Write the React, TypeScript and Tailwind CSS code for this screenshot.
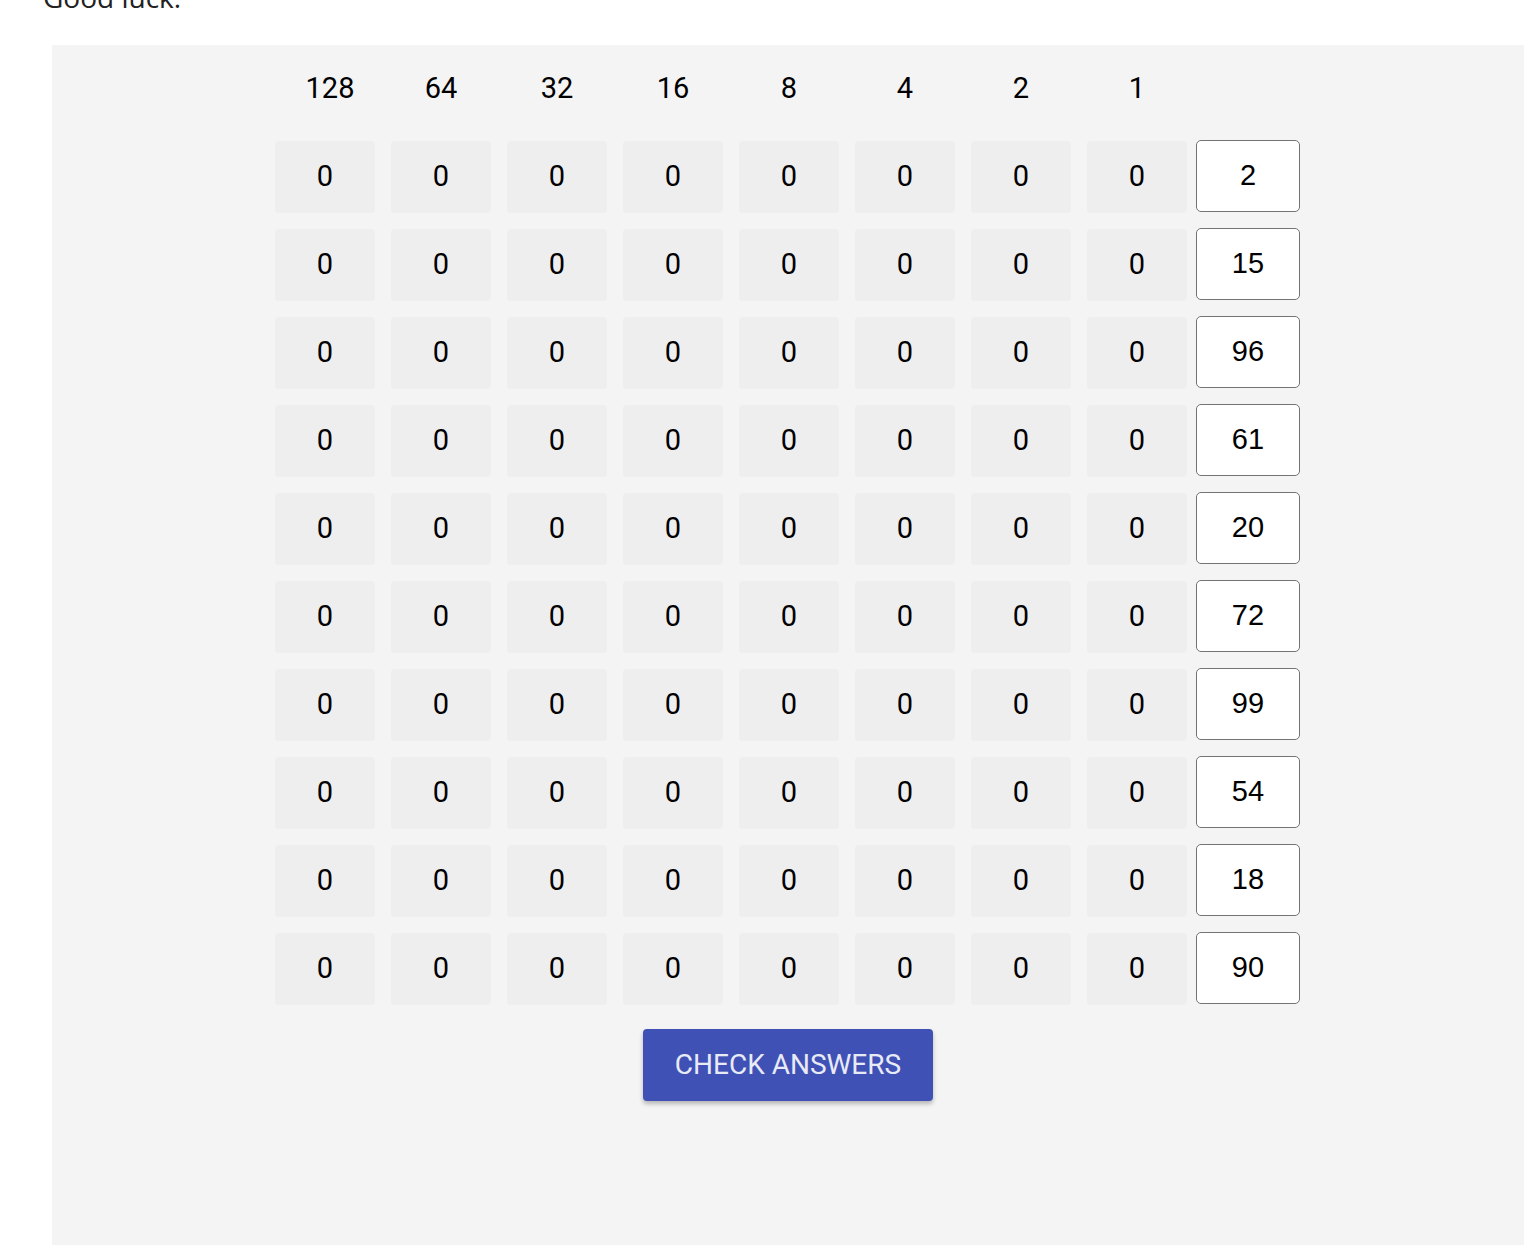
const weights = [128, 64, 32, 16, 8, 4, 2, 1];
const targets = [2, 15, 96, 61, 20, 72, 99, 54, 18, 90];

export default function App() {
  return (
    <div className="min-h-screen bg-white pb-[11px]">
      <p
        className="-mt-[17px] ml-[43px] text-[28px] leading-none text-[#222]"
        style={{ fontFamily: "'Open Sans', sans-serif" }}
      >
        Good luck.
      </p>

      <div
        className="mt-[34px] ml-[52px] mr-[6px] h-[1200px] bg-[#f4f4f4] pt-[8px] flex flex-col items-center text-black"
        style={{ fontFamily: "Roboto, sans-serif" }}
      >
        <div className="flex flex-col gap-4 -ml-[1px]">
          {/* bit weights */}
          <div className="flex">
            <div className="flex gap-4">
              {weights.map((w, i) => (
                <div
                  key={w}
                  className={`w-[100px] h-[72px] flex items-center justify-center text-[29px] ${i === 0 ? "pl-[10px]" : ""}`}
                >
                  {w}
                </div>
              ))}
            </div>
            <div className="w-[104px] ml-[9px]" />
          </div>

          {targets.map((t, r) => (
            <div key={r} className="flex items-center">
              <div className="flex gap-4">
                {weights.map((w) => (
                  <div
                    key={w}
                    className="w-[100px] h-[72px] rounded-[4px] bg-[#eeeeee] flex items-center justify-center text-[29px]"
                  >
                    0
                  </div>
                ))}
              </div>
              <div
                className="ml-[9px] -mt-[2px] w-[104px] h-[72px] rounded-[5px] border-[1.5px] border-[#737373] bg-white flex items-center justify-center text-[29px]"
                style={{ fontFamily: "'Liberation Sans', Arial, sans-serif" }}
              >
                {t}
              </div>
            </div>
          ))}
        </div>

        <button className="mt-[24px] w-[290px] h-[72px] rounded-[4px] bg-[#3f51b5] text-[#e8eaf6] text-[28px] uppercase shadow-[0_3px_4px_rgba(0,0,0,0.25)]">
          Check Answers
        </button>
      </div>
    </div>
  );
}
